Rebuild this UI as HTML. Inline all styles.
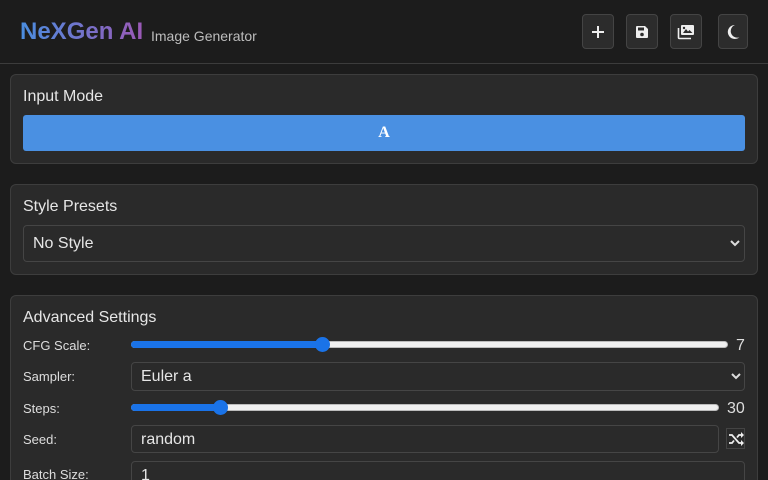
<!DOCTYPE html>
<html style="width:768px;height:480px;overflow:hidden"><head><meta charset="utf-8"><style>
*{box-sizing:border-box;margin:0;padding:0}
body{width:768px;height:480px;overflow:hidden;background:#1c1c1c;font-family:"Liberation Sans",sans-serif;color:#e6e6e6;position:relative}
.a{position:absolute}
.hdr{left:0;top:0;width:768px;height:64px;background:#1c1c1c;border-bottom:1px solid #3c3c3c}
.logo{left:20px;top:18px;font-size:24px;font-weight:bold;background:linear-gradient(90deg,#4a8ee0,#9b59b6);-webkit-background-clip:text;color:transparent}
.sub{left:151px;top:28px;font-size:14px;color:#bdbdbd}
.btn{top:14px;width:32px;height:35px;background:#2c2c2c;border:1px solid #444;border-radius:4px;display:flex;align-items:center;justify-content:center}
.panel{left:10px;width:748px;background:#2a2a2a;border:1px solid #3d3d3d;border-radius:6px}
.h{font-size:16px;color:#e6e6e6}
.field{background:#2a2a2a;border:1px solid #454545;border-radius:4px;font-size:16px;color:#e6e6e6;padding-left:9px;display:flex;align-items:center}
.lbl{left:23px;font-size:13px;color:#ddd}
.track{height:7px;background:#efefef;border-radius:4px;border:1px solid #bbb}
.fill{height:7px;background:#1a73e8;border-radius:4px}
.thumb{width:15px;height:15px;border-radius:50%;background:#1a73e8}
.val{font-size:16px;color:#ddd}
</style></head><body>
<div class="a hdr"></div>
<div class="a logo">NeXGen AI</div>
<div class="a sub">Image Generator</div>
<div class="a btn" style="left:582px"><svg width="16" height="16" viewBox="0 0 16 16"><path d="M8 2v12M2 8h12" stroke="#eee" stroke-width="2"/></svg></div>
<div class="a btn" style="left:626px"><svg width="14" height="14" viewBox="0 0 14 14"><path d="M1 2a1 1 0 0 1 1-1h8l3 3v8a1 1 0 0 1-1 1H2a1 1 0 0 1-1-1z" fill="#eee"/><rect x="3" y="2.5" width="6" height="3" fill="#2c2c2c"/><circle cx="7" cy="9.5" r="1.8" fill="#2c2c2c"/></svg></div>
<div class="a btn" style="left:670px"><svg width="18" height="16" viewBox="0 0 18 16"><rect x="4" y="1" width="13" height="10" rx="1" fill="#eee"/><path d="M6 9l3-4 2 2.5 1.5-1.5 3 3z" fill="#2c2c2c"/><circle cx="7" cy="4" r="1.2" fill="#2c2c2c"/><path d="M1.5 4v9.5a1 1 0 0 0 1 1H14" stroke="#eee" stroke-width="1.6" fill="none"/></svg></div>
<div class="a btn" style="left:718px;width:30px"><svg width="14" height="16" viewBox="0 0 14 16"><path d="M9 1a7 7 0 1 0 4.5 12.2A6 6 0 0 1 9 1z" fill="#eee"/></svg></div>

<div class="a panel" style="top:74px;height:90px"></div>
<div class="a h" style="left:23px;top:88px">Input Mode</div>
<div class="a" style="left:23px;top:115px;width:722px;height:36px;background:#4a90e2;border-radius:3px;display:flex;align-items:center;justify-content:center"><span style="font-family:'Liberation Serif',serif;font-weight:bold;font-size:16px;color:#fff">A</span></div>

<div class="a panel" style="top:184px;height:91px"></div>
<div class="a h" style="left:23px;top:198px">Style Presets</div>
<div class="a field" style="left:23px;top:225px;width:722px;height:37px;padding-top:1px">No Style</div>
<svg class="a" style="left:730px;top:239px" width="10" height="8" viewBox="0 0 10 8"><path d="M1 2l4 4 4-4" stroke="#ddd" stroke-width="2" fill="none"/></svg>

<div class="a panel" style="top:295px;height:200px"></div>
<div class="a h" style="left:23px;top:309px">Advanced Settings</div>
<div class="a lbl" style="top:338px">CFG Scale:</div>
<div class="a track" style="left:131px;top:341px;width:597px"></div>
<div class="a fill" style="left:131px;top:341px;width:192px"></div>
<div class="a thumb" style="left:315px;top:337px"></div>
<div class="a val" style="left:736px;top:337px">7</div>

<div class="a lbl" style="top:369px">Sampler:</div>
<div class="a field" style="left:131px;top:362px;width:614px;height:29px;padding-top:1px">Euler a</div>
<svg class="a" style="left:731px;top:372px" width="10" height="8" viewBox="0 0 10 8"><path d="M1 2l4 4 4-4" stroke="#ddd" stroke-width="2" fill="none"/></svg>

<div class="a lbl" style="top:401px">Steps:</div>
<div class="a track" style="left:131px;top:404px;width:588px"></div>
<div class="a fill" style="left:131px;top:404px;width:90px"></div>
<div class="a thumb" style="left:213px;top:400px"></div>
<div class="a val" style="left:727px;top:400px">30</div>

<div class="a lbl" style="top:432px">Seed:</div>
<div class="a field" style="left:131px;top:425px;width:588px;height:28px;padding-top:1px">random</div>
<div class="a" style="left:726px;top:428px;width:19px;height:21px;border:1px solid #444;display:flex;align-items:center;justify-content:center"><svg width="16" height="14" viewBox="0 0 16 14"><path d="M1 3h3l7 8h3M1 11h3l2-2.5M9 5.5L11 3h3" stroke="#eee" stroke-width="1.8" fill="none"/><path d="M13 0l3 3-3 3zM13 8l3 3-3 3z" fill="#eee"/></svg></div>

<div class="a lbl" style="top:467px">Batch Size:</div>
<div class="a field" style="left:131px;top:461px;width:614px;height:30px;align-items:flex-start;padding-top:5px">1</div>
</body></html>
